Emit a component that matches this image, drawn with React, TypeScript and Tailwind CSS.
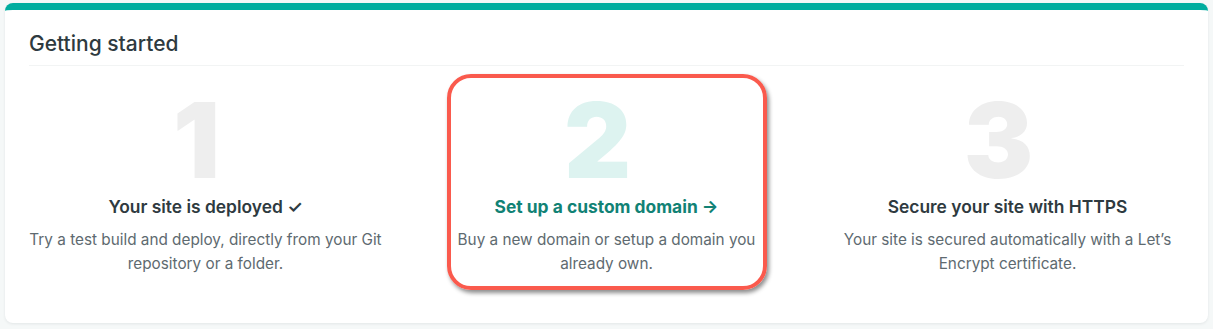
import React from "react";

const steps = [
  {
    num: "1",
    title: "Your site is deployed ✓",
    text: "Try a test build and deploy, directly from your Git repository or a folder.",
    active: false,
  },
  {
    num: "2",
    title: "Set up a custom domain →",
    text: "Buy a new domain or setup a domain you already own.",
    active: true,
  },
  {
    num: "3",
    title: "Secure your site with HTTPS",
    text: "Your site is secured automatically with a Let’s Encrypt certificate.",
    active: false,
  },
];

export default function App() {
  return (
    <div className="w-[1213px] h-[329px] bg-[#f5f8f8] pt-[3px] px-[5px] font-['Inter',sans-serif]">
      <div className="h-[320px] bg-white rounded-[8px] border-t-[7px] border-[#00ad9f] shadow-[0_1px_3px_rgba(14,30,37,0.08)] px-6">
        <div className="pt-5 pb-[7px] border-b border-[#f2f4f4]">
          <h2 className="text-[21px] leading-7 font-medium text-[#2e3a40]">Getting started</h2>
        </div>

        <div className="grid grid-cols-3 gap-12 pt-[23px]">
          {steps.map((s) => (
            <div key={s.num} className="relative flex flex-col items-center text-center">
              {s.active && (
                <div className="absolute -top-[15px] left-[17px] right-[16px] h-[216px] rounded-[24px] border-4 border-[#fa5a4d] shadow-[2px_3px_4px_rgba(0,0,0,0.45)] pointer-events-none" />
              )}
              <div
                className={
                  "mt-[10px] mr-[18px] h-[83px] text-[104px] leading-[83px] font-black " +
                  (s.active ? "text-[#ddf3f0]" : "text-[#eeeeee]")
                }
              >
                {s.num}
              </div>
              <h3
                className={
                  "mt-[13px] text-[17.4px] leading-6 " +
                  (s.active ? "font-bold text-[#118275]" : "font-semibold text-[#2e3a40]")
                }
              >
                {s.title}
              </h3>
              <p className="mt-[9px] text-[15.3px] leading-6 text-[#5e6a70]">{s.text}</p>
            </div>
          ))}
        </div>
      </div>
    </div>
  );
}
